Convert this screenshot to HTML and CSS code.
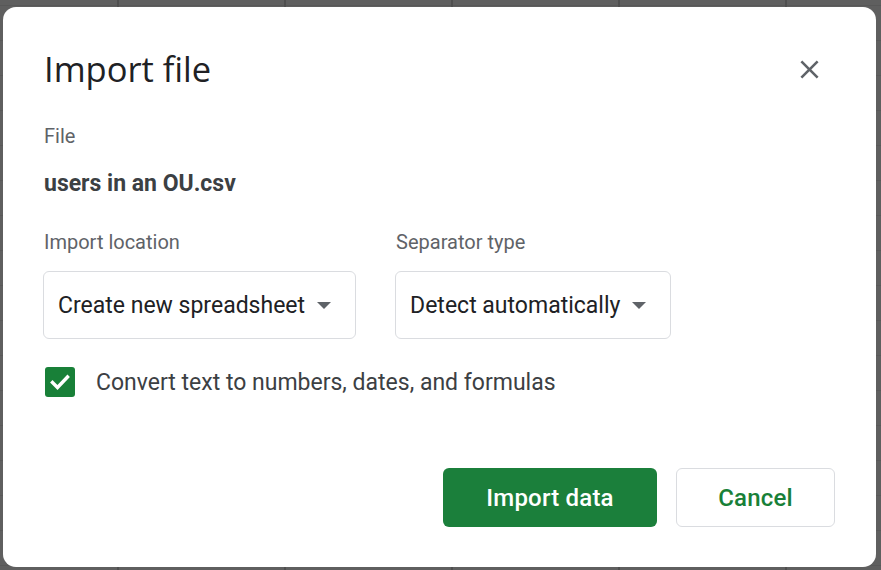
FILE: index.html
```html
<!DOCTYPE html>
<html lang="en">
<head>
  <meta charset="UTF-8">
  <title>Import file</title>
  <link rel="stylesheet" href="styles.css">
</head>
<body>

<div class="dialog">
  <div class="header">
    <h1>Import file</h1>
    <button class="close" aria-label="Close">
      <svg width="24" height="24" viewBox="0 0 24 24"><path d="M19 6.41 17.59 5 12 10.59 6.41 5 5 6.41 10.59 12 5 17.59 6.41 19 12 13.41 17.59 19 19 17.59 13.41 12z"/></svg>
    </button>
  </div>

  <div class="label">File</div>
  <div class="filename">users in an OU.csv</div>

  <div class="options">
    <div class="field">
      <div class="label">Import location</div>
      <div class="select">Create new spreadsheet <span class="arrow"></span></div>
    </div>
    <div class="field">
      <div class="label">Separator type</div>
      <div class="select">Detect automatically <span class="arrow"></span></div>
    </div>
  </div>

  <label class="check">
    <span class="box">
      <svg width="30" height="30" viewBox="0 0 30 30"><path d="M7.5 15.5l5 5 10-10.5" fill="none" stroke="#fff" stroke-width="3.4" stroke-linecap="square"/></svg>
    </span>
    Convert text to numbers, dates, and formulas
  </label>

  <div class="actions">
    <button class="primary">Import data</button>
    <button class="secondary">Cancel</button>
  </div>
</div>

</body>
</html>
```

FILE: styles.css
```css
body {
  margin: 0;
  height: 570px;
  overflow: hidden;
  font-family: Roboto, "Liberation Sans", sans-serif;
  background-color: #5f5f5f;
  background-image:
    linear-gradient(to right, #4f4f4f 2px, transparent 2px),
    linear-gradient(to bottom, #585858 1px, transparent 1px);
  background-size: 167px 100%, 100% 35px;
  background-position: 117px 0, 0 40px;
}
.dialog {
  box-sizing: border-box;
  margin: 7px 0 0 3px;
  width: 873px;
  height: 560px;
  padding: 0 41px 40px 41px;
  background: #fff;
  border-radius: 13px;
  display: flex;
  flex-direction: column;
}
.header {
  display: flex;
  justify-content: space-between;
  align-items: center;
  margin-top: 39px;
}
h1 {
  margin: 0;
  font-family: "Open Sans", Roboto, sans-serif;
  font-weight: 400;
  font-size: 34.5px;
  line-height: 46px;
  color: #202124;
}
.close {
  border: none;
  background: none;
  padding: 0;
  margin-right: 8px;
  width: 36px;
  height: 36px;
  display: flex;
  align-items: center;
  justify-content: center;
}
.close svg {
  width: 31px;
  height: 31px;
  fill: #5f6368;
}
.label {
  font-size: 20px;
  line-height: 24px;
  color: #5f6368;
}
.header + .label {
  margin-top: 32px;
}
.filename {
  margin-top: 22px;
  font-size: 23px;
  font-weight: 700;
  line-height: 28px;
  color: #3c4043;
}
.options {
  display: flex;
  gap: 39px;
  margin-top: 32px;
  margin-left: -1px;
}
.field .label {
  margin-left: 1px;
  margin-bottom: 17px;
}
.select {
  box-sizing: border-box;
  height: 68px;
  padding: 0 24px 0 14px;
  border: 1px solid #dadce0;
  border-radius: 6px;
  display: flex;
  align-items: center;
  gap: 12px;
  font-size: 23px;
  color: #202124;
}
.arrow {
  width: 0;
  height: 0;
  border-left: 7px solid transparent;
  border-right: 7px solid transparent;
  border-top: 7px solid #5f6368;
}
.check {
  display: flex;
  align-items: center;
  gap: 21px;
  margin-top: 28px;
  font-size: 23px;
  color: #3c4043;
}
.box {
  width: 30px;
  height: 30px;
  border-radius: 3px;
  background: #188038;
  margin-left: 1px;
}
.box svg {
  display: block;
}
.actions {
  margin-top: auto;
  display: flex;
  justify-content: flex-end;
  gap: 19px;
}
.actions button {
  box-sizing: border-box;
  height: 59px;
  border-radius: 6px;
  font-family: Roboto, sans-serif;
  font-size: 24px;
  font-weight: 500;
  letter-spacing: 0.2px;
  cursor: pointer;
}
.primary {
  width: 214px;
  border: none;
  background: #1b7f3b;
  color: #fff;
}
.secondary {
  width: 159px;
  border: 1px solid #dadce0;
  background: #fff;
  color: #188038;
}
```
